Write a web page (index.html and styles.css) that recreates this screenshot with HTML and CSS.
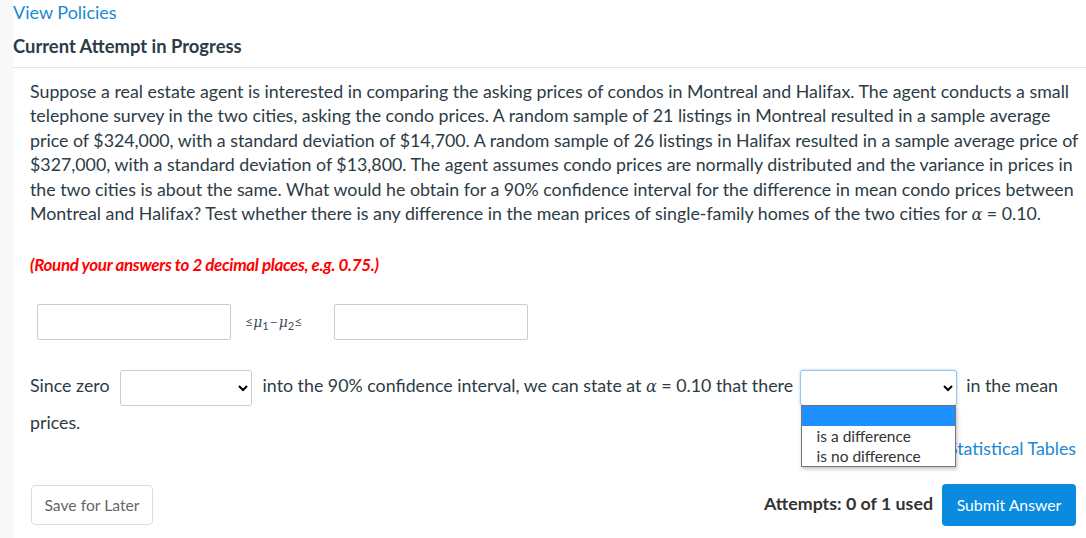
FILE: index.html
```html
<!DOCTYPE html>
<html lang="en">
<head>
    <meta charset="UTF-8">
    <meta name="viewport" content="width=device-width, initial-scale=1.0">
    <title>Question</title>
    <link rel="stylesheet" href="styles.css">
</head>
<body>
    <div class="main">
        <div class="top">
            <a href="#" class="policies">View Policies</a>
            <h2 class="attempt-title">Current Attempt in Progress</h2>
        </div>

        <div class="question">
            <p class="question-text">Suppose a real estate agent is interested in comparing the asking prices of condos in Montreal and Halifax. The agent conducts a small telephone survey in the two cities, asking the condo prices. A random sample of 21 listings in Montreal resulted in a sample average price of $324,000, with a standard deviation of $14,700. A random sample of 26 listings in Halifax resulted in a sample average price of $327,000, with a standard deviation of $13,800. The agent assumes condo prices are normally distributed and the variance in prices in the two cities is about the same. What would he obtain for a 90% confidence interval for the difference in mean condo prices between Montreal and Halifax? Test whether there is any difference in the mean prices of single-family homes of the two cities for <span class="math">α</span> = 0.10.</p>

            <p class="round-note">(Round your answers to 2 decimal places, e.g. 0.75.)</p>

            <div class="interval-row">
                <input type="text" class="answer-box">
                <span class="interval-label">≤<span class="math">μ</span><sub>1</sub><span class="minus">−</span><span class="math">μ</span><sub>2</sub>≤</span>
                <input type="text" class="answer-box">
            </div>

            <p class="conclusion">Since zero
                <select class="answer-select small"><option></option><option>lies</option><option>does not lie</option></select>
                into the 90% confidence interval, we can state at <span class="math">α</span> = 0.10 that there
                <span class="select-wrap">
                    <select class="answer-select focused"><option></option><option>is a difference</option><option>is no difference</option></select>
                    <span class="options-list">
                        <span class="option selected">&nbsp;</span>
                        <span class="option">is a difference</span>
                        <span class="option">is no difference</span>
                    </span>
                </span>
                in the mean prices.</p>

            <div class="tables-link"><a href="#">Statistical Tables</a></div>
        </div>

        <div class="footer">
            <button class="save-button">Save for Later</button>
            <div class="submit-area">
                <span class="attempts">Attempts: 0 of 1 used</span>
                <button class="submit-button">Submit Answer</button>
            </div>
        </div>
    </div>
</body>
</html>
```

FILE: styles.css
```css
body {
    font-family: Lato, "Open Sans", sans-serif;
    margin: 0;
    padding: 0;
    background-color: #f8f8f8;
    color: #2d3b45;
}
a {
    color: #1b87d6;
    text-decoration: none;
}
.main {
    margin-left: 13px;
    background-color: #ffffff;
    min-height: 538px;
}
.top {
    padding-top: 1px;
}
.policies {
    display: block;
    font-size: 18px;
    line-height: 22px;
}
.attempt-title {
    font-size: 18.4px;
    font-weight: bold;
    margin: 10px 0 0;
    line-height: 26px;
    padding-bottom: 8px;
    border-bottom: 1px solid #e6e6e6;
}
.question {
    padding: 11px 10px 0 17px;
}
.question-text {
    font-size: 17.8px;
    line-height: 24.4px;
    margin: 0 -6px 0 0;
}
.math {
    font-family: "DejaVu Serif", "Liberation Serif", serif;
    font-style: italic;
    font-size: 16px;
}
sub {
    font-size: 11px;
    vertical-align: -3px;
}
.round-note {
    color: #ff0000;
    font-style: italic;
    font-weight: bold;
    font-size: 17px;
    line-height: 24px;
    margin: 26px 0 0;
    letter-spacing: -0.35px;
}
.interval-row {
    display: flex;
    align-items: center;
    gap: 14px;
    margin: 27px 0 0 7px;
}
.answer-box {
    width: 194px;
    height: 36px;
    box-sizing: border-box;
    border: 1px solid #cccccc;
    border-radius: 2px;
    margin: 0;
}
.interval-label {
    font-size: 14px;
    color: #5a6670;
    margin-right: 18px;
    white-space: nowrap;
}
.interval-label .math {
    color: #3a4a55;
    font-size: 14px;
}
.interval-label sub {
    color: #3a4a55;
}
.minus {
    margin: 0 1px;
}
.conclusion {
    font-size: 17.8px;
    line-height: 33px;
    margin: 27px 0 0;
}
.answer-select {
    width: 157px;
    height: 36px;
    border: 1px solid #cccccc;
    border-radius: 3px;
    background-color: #ffffff;
    vertical-align: middle;
    margin: 0 5px 0 2px;
    font-family: Lato, sans-serif;
    font-size: 14px;
}
.answer-select.small {
    width: 132px;
    margin: 0 6px 0 6px;
}
.answer-select.focused {
    border-color: #9cc4ee;
    box-shadow: 0 0 3px rgba(27, 135, 214, 0.4);
    outline: none;
}
.select-wrap {
    position: relative;
    display: inline-block;
    line-height: 36px;
}
.options-list {
    position: absolute;
    top: 38px;
    left: 3px;
    width: 153px;
    display: flex;
    flex-direction: column;
    background-color: #ffffff;
    border: 1px solid #767676;
    box-shadow: 1px 2px 4px rgba(0, 0, 0, 0.25);
    z-index: 10;
}
.option {
    font-size: 15.5px;
    line-height: 20px;
    padding-left: 15px;
    color: #333333;
}
.option.selected {
    background-color: #1e90ff;
}
.tables-link {
    text-align: right;
    font-size: 17.8px;
    line-height: 24px;
    margin-top: -3px;
}
.footer {
    display: flex;
    justify-content: space-between;
    align-items: center;
    padding: 24px 10px 0 18px;
}
.save-button {
    height: 40px;
    width: 122px;
    background-color: #ffffff;
    border: 1px solid #dddddd;
    border-radius: 4px;
    color: #666666;
    font-family: Lato, sans-serif;
    font-size: 15.7px;
    cursor: pointer;
}
.submit-area {
    display: flex;
    align-items: center;
    gap: 9px;
}
.attempts {
    font-size: 17.8px;
    font-weight: bold;
    color: #333333;
    margin-top: -4px;
}
.submit-button {
    height: 42px;
    width: 134px;
    background-color: #0a8be0;
    border: none;
    border-radius: 4px;
    color: #ffffff;
    font-family: Lato, sans-serif;
    font-size: 15.8px;
    cursor: pointer;
}
```
